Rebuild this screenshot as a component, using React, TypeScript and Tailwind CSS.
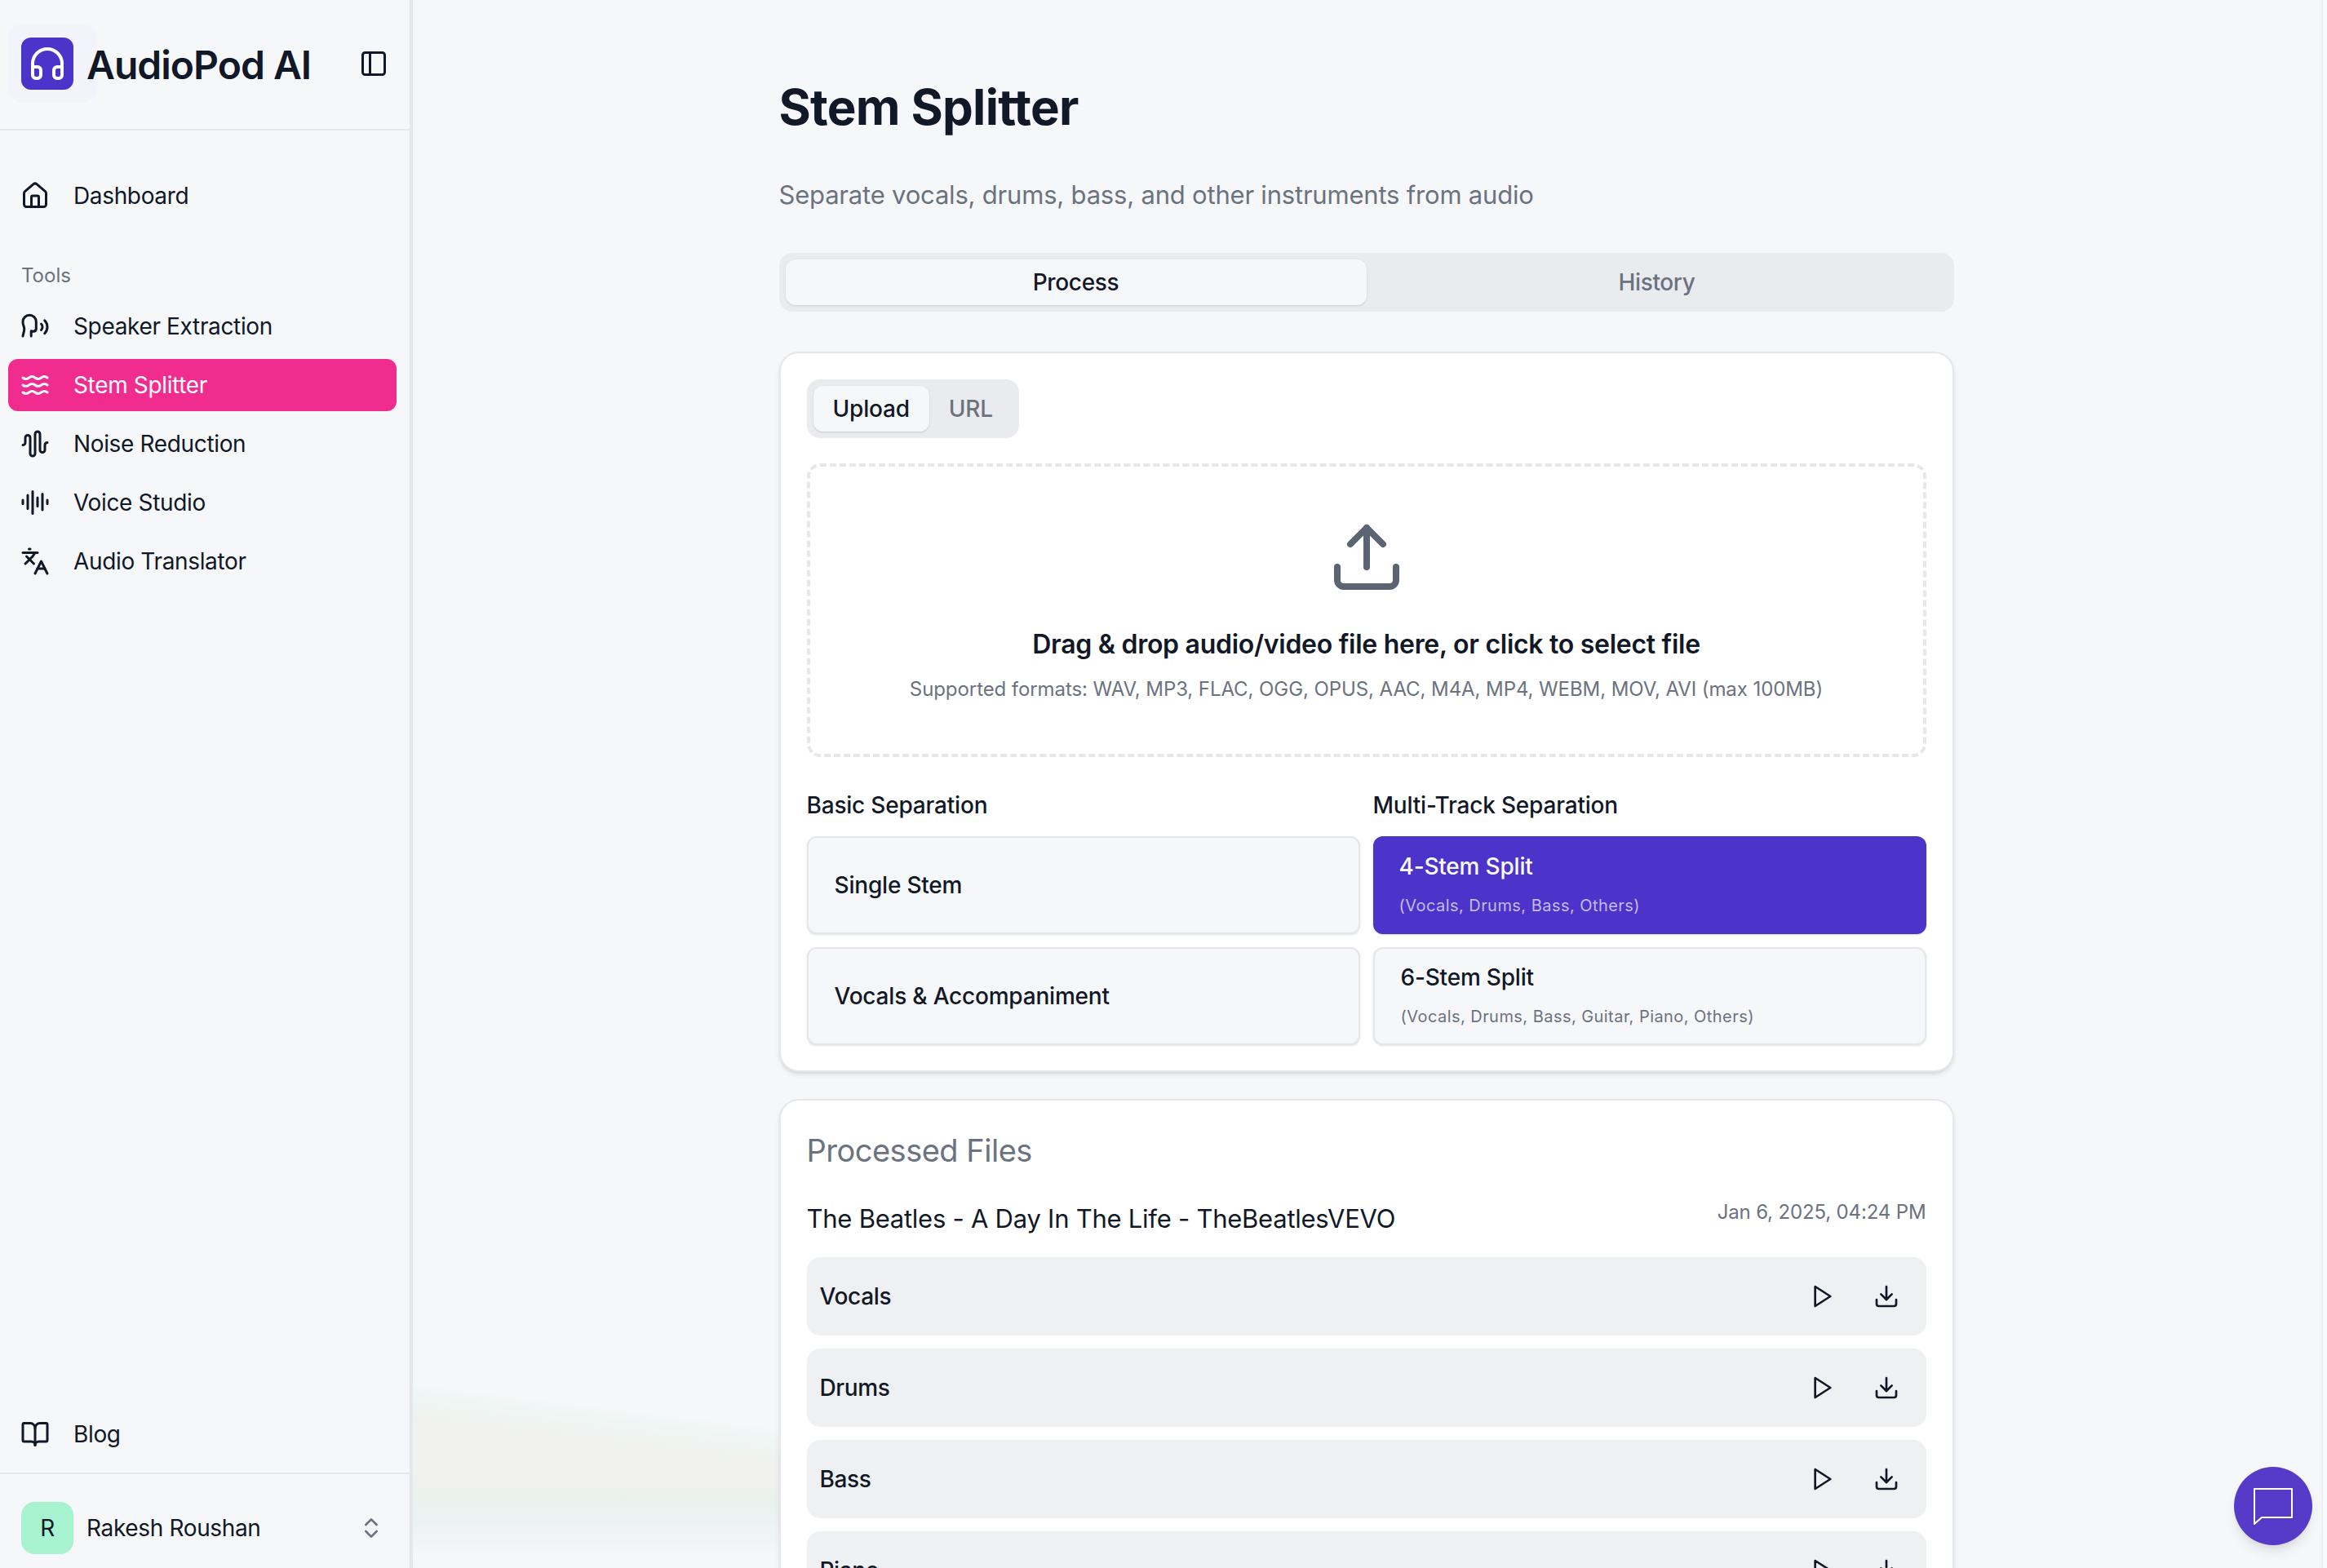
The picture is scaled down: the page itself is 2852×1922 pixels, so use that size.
import React from 'react';
import {
  AudioLines,
  AudioWaveform,
  BookOpen,
  ChevronsUpDown,
  Download,
  Headphones,
  Home,
  Languages,
  PanelLeft,
  Speech,
  Upload,
  Waves,
} from 'lucide-react';

const tools = [
  { label: 'Speaker Extraction', Icon: Speech },
  { label: 'Stem Splitter', Icon: Waves, active: true },
  { label: 'Noise Reduction', Icon: AudioWaveform },
  { label: 'Voice Studio', Icon: AudioLines },
  { label: 'Audio Translator', Icon: Languages },
];

const stems = ['Vocals', 'Drums', 'Bass', 'Piano'];

const NavRow = ({ label, Icon, active }: { label: string; Icon: React.ElementType; active?: boolean }) => (
  <div
    className={`flex h-16 w-[476px] items-center gap-[29px] rounded-xl pl-[15px] text-[28px] ${
      active ? 'bg-[#f02d8e] text-[#f9fafb]' : 'text-[#111827]'
    }`}
  >
    <Icon size={36} strokeWidth={2} className="shrink-0" />
    <span>{label}</span>
  </div>
);

const ModeButton = ({ title, sub, selected }: { title: string; sub?: string; selected?: boolean }) => (
  <div
    className={`flex h-[120px] flex-col justify-center rounded-xl px-8 shadow-sm ${
      selected ? 'bg-[#4c33c9] text-[#f9fafb]' : 'border-2 border-[#e5e7eb] bg-[#f6f7f9] text-[#111827]'
    } ${sub ? 'pb-[5px]' : ''}`}
  >
    <div className="text-[28px] leading-10 font-medium tracking-[-0.2px]">{title}</div>
    {sub && (
      <div className={`mt-[14px] text-[20px] leading-7 tracking-[0.45px] ${selected ? 'text-[#c3bbec]' : 'text-[#6b7280]'}`}>{sub}</div>
    )}
  </div>
);

const StemRow = ({ name }: { name: string }) => (
  <div className="flex h-24 shrink-0 items-center justify-between rounded-2xl bg-[#eff0f2] pr-[33px] pl-4 text-[#111827]">
    <span className="text-[28px] font-medium">{name}</span>
    <div className="flex items-center gap-[46px]">
      <svg width="32" height="32" viewBox="0 0 24 24" fill="none" stroke="currentColor" strokeWidth="2" strokeLinecap="round" strokeLinejoin="round">
        <polygon points="5 3 19 12 5 21 5 3" />
      </svg>
      <Download size={32} strokeWidth={2} />
    </div>
  </div>
);

export default function App() {
  return (
    <div className="relative flex h-[1922px] w-[2852px] overflow-hidden bg-[#f6f7f9] font-['Inter',sans-serif] tracking-[-0.35px] text-[#111827]">
      {/* sidebar */}
      <aside className="relative z-10 flex h-full w-[506px] shrink-0 flex-col border-r-4 border-[#e5e7eb]">
        <div className="relative flex h-[160px] shrink-0 items-start border-b-2 border-[#e5e7eb] pt-[46px] pl-[26px]">
          <div className="absolute top-[30px] left-[10px] h-[95px] w-[109px] rounded-2xl bg-[#f3f3fb]" />
          <div className="relative flex h-16 w-16 items-center justify-center rounded-xl bg-[#4c33c9] text-white">
            <Headphones size={48} strokeWidth={2} />
          </div>
          <span className="relative top-[2px] ml-[16px] text-[48px] leading-[64px] font-semibold tracking-[-1px]">AudioPod AI</span>
          <PanelLeft size={36} strokeWidth={2} className="absolute top-[60px] left-[440px]" />
        </div>

        <div className="mt-[48px] flex flex-1 flex-col pl-[10px]">
          <NavRow label="Dashboard" Icon={Home} />
          <div className="mt-[50px] mb-[14px] pl-[16px] text-[24px] leading-8 tracking-normal text-[#6b7280]">Tools</div>
          <div className="flex flex-col gap-2">
            {tools.map((t) => (
              <NavRow key={t.label} {...t} />
            ))}
          </div>
          <div className="mt-auto mb-[15px]">
            <NavRow label="Blog" Icon={BookOpen} />
          </div>
        </div>

        <div className="flex h-[117px] shrink-0 items-center border-t-2 border-[#e5e7eb] pt-[16px] pl-[26px]">
          <div className="flex h-16 w-16 items-center justify-center rounded-2xl bg-[#a7f3d0] text-[28px]">R</div>
          <span className="ml-4 text-[28px]">Rakesh Roushan</span>
          <ChevronsUpDown size={32} strokeWidth={2} className="mr-[31px] ml-auto text-[#6b7280]" />
        </div>
      </aside>

      {/* main */}
      <main className="relative flex min-w-0 flex-1 justify-center overflow-hidden pr-[2px]">
        {/* soft colour wash behind the cards */}
        <div className="absolute top-[1690px] left-0 h-[222px] w-[470px] bg-[linear-gradient(187deg,#f6f7f9_22%,#eef6f3_28%,#f1f1ef_40%,#f1f1ef00_48%),linear-gradient(180deg,#f1f1ef_0%,#f1f1ef_55%,#e9f1ed_68%,#eff3f4_85%,#f6f7f9_100%)]" />

        <div className="relative w-[1440px] pt-[95px]">
          <h1 className="text-[60px] leading-[72px] font-bold tracking-[-0.7px]">Stem Splitter</h1>
          <p className="mt-[48px] text-[31px] leading-[48px] tracking-[-0.2px] text-[#6b7280]">Separate vocals, drums, bass, and other instruments from audio</p>

          <div className="mt-[47px] grid h-[72px] grid-cols-2 rounded-2xl bg-[#eaebee] p-2 text-[28px] font-medium">
            <div className="flex items-center justify-center rounded-xl bg-[#f6f7f9] shadow-sm">Process</div>
            <div className="flex items-center justify-center text-[#6b7280]">History</div>
          </div>

          <section className="mt-[49px] rounded-3xl border-2 border-[#e5e7eb] bg-white px-[32px] pt-[32px] pb-[31px] shadow-md">
            <div className="inline-flex h-[72px] items-center rounded-2xl bg-[#eaebee] p-2 align-top text-[28px] font-medium tracking-[-0.2px]">
              <div className="flex h-14 items-center rounded-xl bg-[#f6f7f9] px-6 shadow-sm">Upload</div>
              <div className="px-6 text-[#6b7280]">URL</div>
            </div>

            <div className="mt-[31px] flex h-[360px] flex-col items-center rounded-2xl border-4 border-dashed border-[#e5e7eb] pt-[63px]">
              <Upload size={96} strokeWidth={2} className="text-[#5b6472]" />
              <div className="mt-[35px] text-[32px] leading-[48px] font-semibold tracking-[-0.28px]">Drag &amp; drop audio/video file here, or click to select file</div>
              <div className="mt-[15px] text-[24px] leading-8 tracking-[-0.08px] text-[#6b7280]">
                Supported formats: WAV, MP3, FLAC, OGG, OPUS, AAC, M4A, MP4, WEBM, MOV, AVI (max 100MB)
              </div>
            </div>

            <div className="mt-[39px] grid grid-cols-2 gap-x-4">
              <div>
                <div className="text-[28px] leading-10 font-medium tracking-[-0.2px]">Basic Separation</div>
                <div className="mt-[18px] flex flex-col gap-4">
                  <ModeButton title="Single Stem" />
                  <ModeButton title="Vocals & Accompaniment" />
                </div>
              </div>
              <div>
                <div className="text-[28px] leading-10 font-medium tracking-[-0.2px]">Multi-Track Separation</div>
                <div className="mt-[18px] flex flex-col gap-4">
                  <ModeButton title="4-Stem Split" sub="(Vocals, Drums, Bass, Others)" selected />
                  <ModeButton title="6-Stem Split" sub="(Vocals, Drums, Bass, Guitar, Piano, Others)" />
                </div>
              </div>
            </div>
          </section>

          <section className="mt-[33px] flex h-[800px] flex-col rounded-3xl border-2 border-[#e5e7eb] bg-white px-[32px] pt-[33px] shadow-md">
            <h2 className="text-[38px] leading-[56px] tracking-[-0.5px] text-[#6b7280]">Processed Files</h2>
            <div className="mt-[32px] flex items-start justify-between">
              <span className="text-[31px] leading-[48px] tracking-[-0.25px]">The Beatles - A Day In The Life - TheBeatlesVEVO</span>
              <span className="text-[24px] leading-8 tracking-[-0.15px] text-[#6b7280]">Jan 6, 2025, 04:24 PM</span>
            </div>
            <div className="mt-[23px] flex flex-col gap-4">
              {stems.map((s) => (
                <StemRow key={s} name={s} />
              ))}
            </div>
          </section>
        </div>
      </main>

      {/* scrollbar track */}
      <div className="h-full w-[7px] shrink-0 border-l-2 border-[#eceef1] bg-[#f8f9fa]" />

      {/* chat bubble */}
      <div className="absolute top-[1798px] left-[2738px] flex h-24 w-24 items-center justify-center rounded-full bg-[#553bc8] shadow-lg">
        <svg width="50" height="46" viewBox="0 0 50 46" fill="none" stroke="white" strokeWidth="2" strokeLinejoin="round" strokeLinecap="round">
          <path d="M2 2h46v35H11l-9 8z" />
        </svg>
      </div>
    </div>
  );
}
